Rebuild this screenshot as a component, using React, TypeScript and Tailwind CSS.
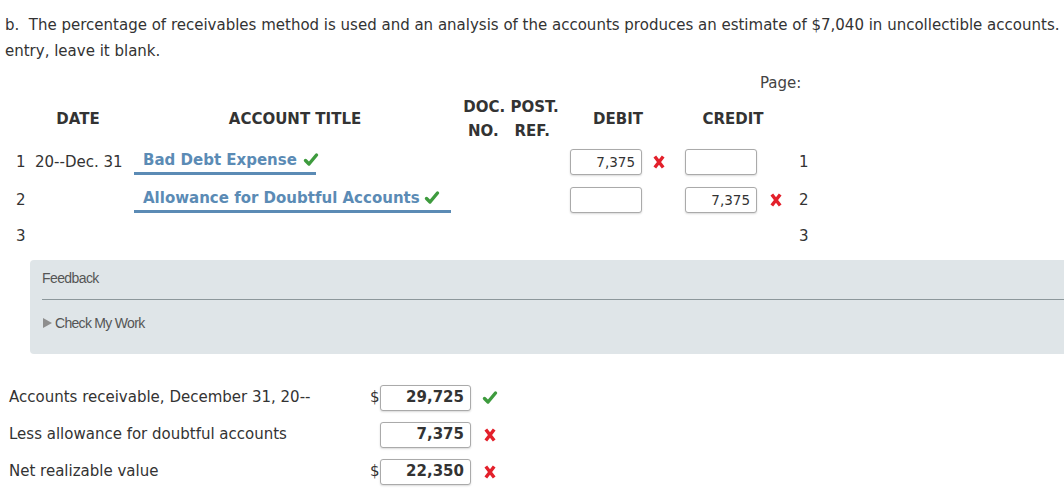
import React from "react";

const Check = ({ className = "" }: { className?: string }) => (
  <svg viewBox="0 0 16 16" className={className} width="16" height="16">
    <path d="M2.5 8.5 L6 12 L13.5 3" fill="none" stroke="#3e9b3e" strokeWidth="3.4" strokeLinecap="round" strokeLinejoin="round" />
  </svg>
);

const Cross = ({ className = "" }: { className?: string }) => (
  <svg viewBox="0 0 12 14" className={className} width="12" height="14">
    <path d="M1.8 1.5 L10.2 12.5 M10.2 1.5 L1.8 12.5" fill="none" stroke="#e3202b" strokeWidth="3.4" strokeLinecap="butt" />
  </svg>
);

const Box = ({ value = "", className = "" }: { value?: string; className?: string }) => (
  <div
    className={`flex h-[26px] w-[72px] shrink-0 items-center justify-end rounded-[3px] border border-[#aaaaaa] bg-white pr-[6px] text-[13.5px] text-[#333] shadow-[0_1px_2px_rgba(0,0,0,0.15)] ${className}`}
  >
    {value}
  </div>
);

export default function App() {
  return (
    <div className="relative h-[499px] w-[1064px] overflow-hidden bg-white font-['DejaVu_Sans',Verdana,sans-serif] text-[#333]">
      <div className="whitespace-nowrap pl-[5px] pt-[12px] text-[15px] leading-[26px] text-[#333]">
        <div>
          b.&nbsp; The percentage of receivables method is used and an analysis of the accounts produces an estimate of $7,040 in uncollectible accounts. If no
        </div>
        <div>entry, leave it blank.</div>
      </div>

      <div className="mt-[10px] pl-[760px] text-[15px] leading-[18px] text-[#444]">Page:</div>

      {/* header */}
      <div className="mt-[3px] flex h-[48px] items-center whitespace-nowrap text-[15px] font-bold text-[#333]">
        <div className="w-[30px]" />
        <div className="w-[96px] text-center">DATE</div>
        <div className="w-[338px] text-center">ACCOUNT TITLE</div>
        <div className="flex w-[94px] flex-col items-center leading-[24px]">
          <div>DOC. POST.</div>
          <div className="pr-[4px]">NO.&nbsp;&nbsp; REF.</div>
        </div>
        <div className="w-[120px] text-center">DEBIT</div>
        <div className="w-[110px] text-center">CREDIT</div>
      </div>

      {/* row 1 */}
      <div className="flex h-[38px] items-center whitespace-nowrap text-[15px]">
        <div className="w-[35px] shrink-0 pl-[16px]">1</div>
        <div className="w-[99px] shrink-0">20--Dec. 31</div>
        <div className="w-[436px] shrink-0">
          <div className="flex w-[182px] items-center border-b-[3px] border-[#5b8bb5] pb-[1px] pl-[9px]">
            <span className="shrink-0 text-[15px] font-bold text-[#5b8bb5]">Bad Debt Expense</span>
            <Check className="ml-[6px] shrink-0" />
          </div>
        </div>
        <Box value="7,375" />
        <Cross className="ml-[11px]" />
        <Box className="ml-[20px]" />
        <div className="ml-[42px]">1</div>
      </div>

      {/* row 2 */}
      <div className="flex h-[38px] items-center whitespace-nowrap text-[15px]">
        <div className="w-[134px] shrink-0 pl-[16px]">2</div>
        <div className="w-[436px] shrink-0">
          <div className="flex w-[317px] items-center border-b-[3px] border-[#5b8bb5] pb-[1px] pl-[9px]">
            <span className="shrink-0 text-[15px] font-bold text-[#5b8bb5]">Allowance for Doubtful Accounts</span>
            <Check className="ml-[4px] shrink-0" />
          </div>
        </div>
        <Box />
        <Box className="ml-[43px]" value="7,375" />
        <Cross className="ml-[13px]" />
        <div className="ml-[17px]">2</div>
      </div>

      {/* row 3 */}
      <div className="flex h-[34px] items-center text-[15px]">
        <div className="w-[799px] pl-[16px]">3</div>
        <div>3</div>
      </div>

      {/* feedback */}
      <div className="ml-[30px] mt-[7px] h-[94px] rounded-l-[4px] bg-[#dfe5e8] pl-[12px] pt-[9px] font-['Liberation_Sans',Arial,sans-serif] text-[14px] text-[#555]">
        <div className="leading-[18px] tracking-[-0.6px]">Feedback</div>
        <div className="mt-[12px] h-px bg-[#8c979b]" />
        <div className="mt-[14px] flex items-center leading-[18px] tracking-[-0.7px]">
          <svg width="11" height="10" viewBox="0 0 11 10" className="mr-[2px]">
            <path d="M1 0 L10 5 L1 10 Z" fill="#8e8e8e" />
          </svg>
          <span>Check My Work</span>
        </div>
      </div>

      {/* bottom */}
      <div className="mt-[25px] text-[15px]">
        <div className="flex h-[37px] items-center">
          <div className="w-[370px] pl-[9px]">Accounts receivable, December 31, 20--</div>
          <div className="w-[10px]">$</div>
          <Box className="!w-[91px] !text-[15px] font-bold" value="29,725" />
          <Check className="ml-[11px]" />
        </div>
        <div className="flex h-[37px] items-center">
          <div className="w-[380px] pl-[9px]">Less allowance for doubtful accounts</div>
          <Box className="!w-[91px] !text-[15px] font-bold" value="7,375" />
          <Cross className="ml-[13px]" />
        </div>
        <div className="flex h-[37px] items-center">
          <div className="w-[370px] pl-[9px]">Net realizable value</div>
          <div className="w-[10px]">$</div>
          <Box className="!w-[91px] !text-[15px] font-bold" value="22,350" />
          <Cross className="ml-[13px]" />
        </div>
      </div>
    </div>
  );
}
